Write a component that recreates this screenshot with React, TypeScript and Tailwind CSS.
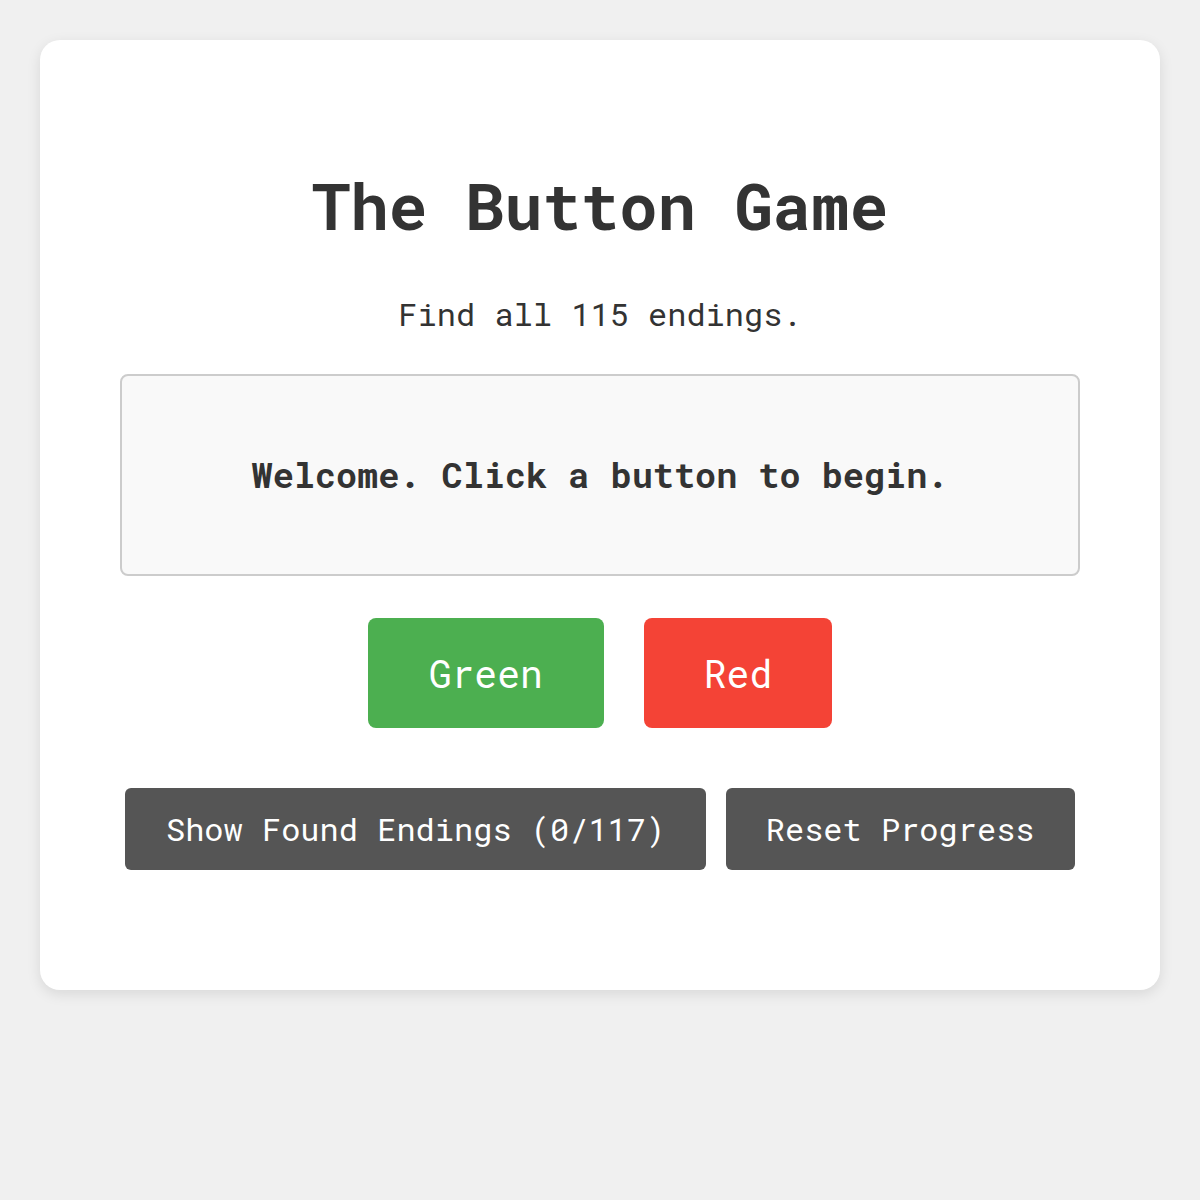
import React, { useState } from "react";

const FONT = "font-['Roboto_Mono','DejaVu_Sans_Mono','Liberation_Mono',monospace]";

const App: React.FC = () => {
  const [message, setMessage] = useState("Welcome. Click a button to begin.");
  const [found] = useState<number[]>([]);

  return (
    <div className={`min-h-[1200px] w-full bg-[#f0f0f0] pt-10 px-10 ${FONT} text-[#333]`}>
      {/* Card */}
      <div className="flex flex-col items-center rounded-[20px] bg-white px-20 pt-[125px] pb-[120px] shadow-[0_4px_14px_rgba(0,0,0,0.1)]">
        <h1 className="flex h-20 items-center text-[64px] font-bold leading-none">The Button Game</h1>
        <p className="mt-[49px] flex h-10 items-center text-[32px] leading-none">Find all 115 endings.</p>

        {/* Message box */}
        <div className="mt-10 flex h-[202px] w-full items-center justify-center rounded-lg border-2 border-[#ccc] bg-[#f9f9f9] px-6">
          <p className="text-[35.2px] font-bold leading-tight text-center">{message}</p>
        </div>

        {/* Choice buttons */}
        <div className="mt-[42px] flex gap-10">
          <button
            onClick={() => setMessage("You pressed green.")}
            className="flex h-[110px] items-center rounded-lg bg-[#4caf50] px-[61px] text-[38px] leading-none text-white"
          >
            Green
          </button>
          <button
            onClick={() => setMessage("You pressed red.")}
            className="flex h-[110px] items-center rounded-lg bg-[#f44336] px-[60px] text-[38px] leading-none text-white"
          >
            Red
          </button>
        </div>

        {/* Footer controls */}
        <div className="mt-[60px] flex gap-5">
          <button className="flex h-[82px] items-center rounded-md bg-[#555] px-[40.5px] text-[32px] leading-none text-white">
            Show Found Endings ({found.length}/117)
          </button>
          <button
            onClick={() => setMessage("Welcome. Click a button to begin.")}
            className="flex h-[82px] items-center rounded-md bg-[#555] px-10 text-[32px] leading-none text-white"
          >
            Reset Progress
          </button>
        </div>
      </div>
    </div>
  );
};

export default App;
